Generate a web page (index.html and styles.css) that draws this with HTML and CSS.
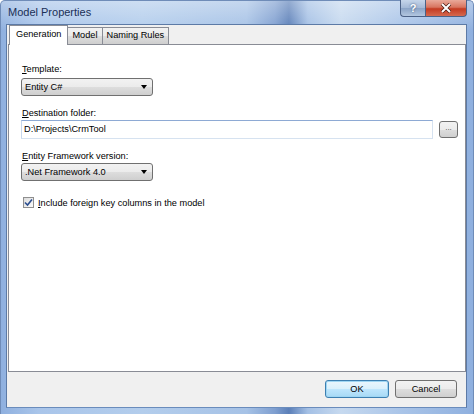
FILE: index.html
```html
<!DOCTYPE html>
<html lang="en">
<head>
    <meta charset="UTF-8">
    <title>Model Properties</title>
    <link rel="stylesheet" href="styles.css">
</head>
<body>
<div class="window">
    <div class="titlebar">
        <span class="title">Model Properties</span>
        <div class="caption-btns">
            <span class="cap help">?</span>
            <span class="cap close">
                <svg width="12" height="10" viewBox="0 0 12 10"><path d="M2 1 L10 9 M10 1 L2 9" stroke="#4a1a12" stroke-width="3.4"/><path d="M2 1 L10 9 M10 1 L2 9" stroke="#fff" stroke-width="2"/></svg>
            </span>
        </div>
    </div>
    <div class="client">
        <div class="tabs">
            <span class="tab active">Generation</span>
            <span class="tab">Model</span>
            <span class="tab">Naming Rules</span>
        </div>
        <div class="pane">
            <label class="lbl first"><u>T</u>emplate:</label>
            <div class="combo">Entity C#<span class="arrow"></span></div>

            <label class="lbl"><u>D</u>estination folder:</label>
            <div class="row">
                <div class="textbox">D:\Projects\CrmTool</div>
                <span class="browse">...</span>
            </div>

            <label class="lbl"><u>E</u>ntity Framework version:</label>
            <div class="combo">.Net Framework 4.0<span class="arrow"></span></div>

            <div class="check-row">
                <span class="checkbox">
                    <svg width="9" height="9" viewBox="0 0 9 9"><path d="M1 4.5 L3.5 7 L8 1.5" fill="none" stroke="#2a4d8f" stroke-width="1.6"/></svg>
                </span>
                <span><u>I</u>nclude foreign key columns in the model</span>
            </div>
        </div>
        <div class="footer">
            <span class="btn default">OK</span>
            <span class="btn cancel">Cancel</span>
        </div>
    </div>
</div>
</body>
</html>
```

FILE: styles.css
```css
html, body {
    margin: 0;
    padding: 0;
}
body {
    width: 474px;
    height: 414px;
    overflow: hidden;
    font-family: "Liberation Sans", Arial, sans-serif;
    font-size: 9.2px;
    color: #000;
}
.window {
    box-sizing: border-box;
    width: 474px;
    height: 414px;
    padding: 0 6px 6px 5px;
    display: flex;
    flex-direction: column;
    border-radius: 5px 5px 0 0;
    background:
        linear-gradient(180deg, rgba(255,255,255,0.35), rgba(255,255,255,0) 30px),
        linear-gradient(90deg, #8fb0df 0%, #a9c5ea 8%, #b3cdec 30%, #a6c2e6 52%, #7f9fd0 58%, #5b7fb8 61%, #a4c0e5 65%, #c6d9ef 72%, #a9c4e8 85%, #8fb0df 100%);
    border: 1px solid #6f8cb8;
    border-bottom: none;
}

/* title bar */
.titlebar {
    height: 23px;
    display: flex;
    justify-content: space-between;
    align-items: flex-start;
}
.title {
    padding: 5px 0 0 2px;
    font-size: 11px;
    color: #1a2f56;
}
.caption-btns {
    display: flex;
    margin-top: -1px;
}
.cap {
    box-sizing: border-box;
    height: 17px;
    display: flex;
    align-items: center;
    justify-content: center;
    border: 1px solid #4b6186;
    border-top: none;
}
.help {
    width: 25px;
    border-right: none;
    border-radius: 0 0 0 4px;
    background: linear-gradient(180deg, #c5d5ea, #a3b8d6 50%, #8aa3c6 51%, #b2c6e0);
    color: #fff;
    font-weight: bold;
    font-size: 11px;
    text-shadow: 0 0 2px #31486d;
}
.close {
    width: 42px;
    border-radius: 0 0 4px 0;
    background: linear-gradient(180deg, #e9a99a, #d87560 45%, #c43b22 55%, #d5694f);
}

/* client area */
.client {
    flex: 1;
    display: flex;
    flex-direction: column;
    background: #f0f0f0;
    border: 1px solid #5c7aa6;
    border-bottom-color: #6a8cbc;
    padding: 0 0 0 1px;
}
.tabs {
    height: 19px;
    display: flex;
    align-items: flex-end;
    padding-left: 1px;
    border-bottom: 1px solid #898c95;
}
.tab {
    box-sizing: border-box;
    height: 17px;
    padding: 2px 4px 0;
    border: 1px solid #898c95;
    border-bottom: none;
    margin-right: -1px;
    background: linear-gradient(180deg, #f2f2f2, #ebebeb 50%, #dddddd 51%, #cfcfcf);
    white-space: nowrap;
}
.tab.active {
    height: 20px;
    padding: 3px 6px 0;
    margin-bottom: -1px;
    background: #fff;
    position: relative;
    z-index: 1;
}

.pane {
    flex: 1;
    background: #fff;
    border: 1px solid #898c95;
    border-top: none;
    padding: 0 7px 0 12px;
    display: flex;
    flex-direction: column;
    align-items: flex-start;
}
.lbl {
    display: block;
    line-height: 12px;
    margin: 11px 0 1px 1px;
}
.lbl.first {
    margin-top: 18px;
    margin-bottom: 3px;
}
.combo {
    box-sizing: border-box;
    width: 132px;
    height: 18px;
    line-height: 16px;
    padding-left: 3px;
    border: 1px solid #707070;
    border-radius: 3px;
    background: linear-gradient(180deg, #f2f2f2, #ebebeb 50%, #dddddd 51%, #cfcfcf);
    display: flex;
    justify-content: space-between;
    align-items: center;
}
.arrow {
    width: 0;
    height: 0;
    margin-right: 5px;
    border-left: 3.5px solid transparent;
    border-right: 3.5px solid transparent;
    border-top: 4px solid #000;
}
.row {
    display: flex;
    align-items: center;
    align-self: stretch;
    gap: 6px;
}
.textbox {
    box-sizing: border-box;
    flex: 1;
    height: 19px;
    line-height: 17px;
    padding-left: 2px;
    border: 1px solid #d6e2f0;
    border-top-color: #8eaad4;
    border-left-color: #c7d7ec;
    background: #fff;
}
.browse {
    box-sizing: border-box;
    width: 19px;
    height: 17px;
    border: 1px solid #707070;
    border-radius: 3px;
    background: linear-gradient(180deg, #f2f2f2, #ebebeb 50%, #dddddd 51%, #cfcfcf);
    font-size: 8px;
    line-height: 12px;
    text-align: center;
    color: #444;
}
.check-row {
    display: flex;
    align-items: center;
    margin-top: 16px;
    margin-left: 2px;
    gap: 4px;
}
.checkbox {
    box-sizing: border-box;
    width: 11px;
    height: 11px;
    border: 1px solid #8f8f8f;
    background: linear-gradient(135deg, #dcdcdc, #fbfbfb);
    display: flex;
    align-items: center;
    justify-content: center;
}

/* buttons */
.footer {
    height: 35px;
    display: flex;
    justify-content: flex-end;
    align-items: flex-start;
    padding: 8px 9px 0 0;
    box-sizing: border-box;
    gap: 6px;
}
.btn {
    box-sizing: border-box;
    width: 64px;
    height: 18px;
    line-height: 16px;
    text-align: center;
    border: 1px solid #707070;
    border-radius: 3px;
    background: linear-gradient(180deg, #f2f2f2, #ebebeb 50%, #dddddd 51%, #cfcfcf);
}
.btn.cancel {
    width: 62px;
}
.btn.default {
    border-color: #3c7fb1;
    background: linear-gradient(180deg, #eaf6fd, #d9f0fc 50%, #bee6fd 51%, #a7d9f5);
    box-shadow: inset 0 0 0 1px #9fd6f3;
}
```
